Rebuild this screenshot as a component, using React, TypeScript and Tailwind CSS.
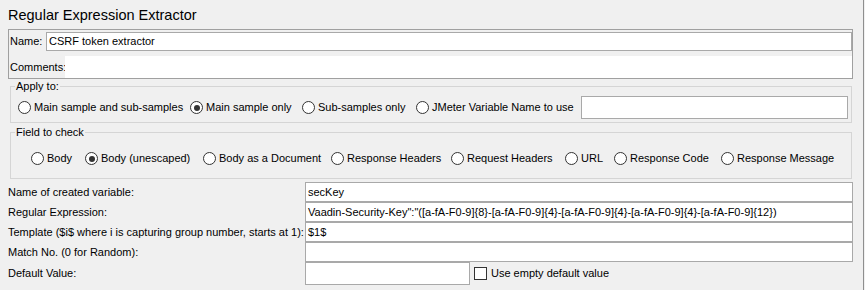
import React from 'react';

// Radio bullet drawn like the Windows look-and-feel in the screenshot
const Radio: React.FC<{ checked?: boolean }> = ({ checked }) => (
    <span className="w-[13px] h-[13px] shrink-0 rounded-full border border-[#333333] bg-white flex items-center justify-center">
        {checked && <span className="w-[6px] h-[6px] rounded-full bg-[#333333]" />}
    </span>
);

const RadioItem: React.FC<{ label: string; checked?: boolean; width: string }> = ({ label, checked, width }) => (
    <label className={`flex items-center gap-[3px] whitespace-nowrap ${width}`}>
        <Radio checked={checked} />
        <span>{label}</span>
    </label>
);

const fields = [
    { label: 'Body', width: 'w-[54px]' },
    { label: 'Body (unescaped)', width: 'w-[118px]', checked: true },
    { label: 'Body as a Document', width: 'w-[128px]' },
    { label: 'Response Headers', width: 'w-[120px]' },
    { label: 'Request Headers', width: 'w-[114px]' },
    { label: 'URL', width: 'w-[49px]' },
    { label: 'Response Code', width: 'w-[107px]' },
    { label: 'Response Message', width: 'w-[108px]' },
];

const rows = [
    { label: 'Name of created variable:', value: 'secKey' },
    {
        label: 'Regular Expression:',
        value: 'Vaadin-Security-Key":"([a-fA-F0-9]{8}-[a-fA-F0-9]{4}-[a-fA-F0-9]{4}-[a-fA-F0-9]{4}-[a-fA-F0-9]{12})',
    },
    { label: 'Template ($i$ where i is capturing group number, starts at 1):', value: '$1$' },
    { label: 'Match No. (0 for Random):', value: '' },
];

export default function App() {
    return (
        <div className="w-[865px] h-[290px] overflow-hidden bg-[#f0f0f0] font-['Liberation_Sans',Arial,sans-serif] text-[11px] text-black">
            <div className="w-[864px] h-full border-r border-[#8f8f8f] pl-2">
                {/* Title */}
                <div className="h-[29px] pt-[6px] text-[14.5px] leading-[18px]">Regular Expression Extractor</div>

                {/* Name / Comments */}
                <div className="w-[845px] border border-[#a0a0a0] pt-[2px]">
                    <div className="flex items-center h-[19px]">
                        <span className="w-[37px] shrink-0 pl-[1px]">Name:</span>
                        <div className="flex-1 h-full bg-white border border-[#a9a9a9] pl-[2px] flex items-center">CSRF token extractor</div>
                    </div>
                    <div className="flex items-center h-[22px] mt-[5px]">
                        <span className="w-[56px] shrink-0 pl-[1px] whitespace-nowrap">Comments:</span>
                        <div className="flex-1 h-full bg-white" />
                    </div>
                </div>

                {/* Apply to */}
                <div className="relative ml-[2px] mt-[7px] w-[842px] h-[37px] border border-[#d5d5d5] pt-[9px] pl-[7px] pr-[3px]">
                    <span className="absolute top-[-8px] left-[4px] px-[1px] leading-[14px] bg-[#f0f0f0]">Apply to:</span>
                    <div className="flex items-center h-[23px]">
                        <RadioItem label="Main sample and sub-samples" width="w-[172px]" />
                        <RadioItem label="Main sample only" width="w-[112px]" checked />
                        <RadioItem label="Sub-samples only" width="w-[114px]" />
                        <RadioItem label="JMeter Variable Name to use" width="w-[165px]" />
                        <div className="flex-1 h-full bg-white border border-[#a9a9a9]" />
                    </div>
                </div>

                {/* Field to check */}
                <div className="relative ml-[2px] mt-[9px] w-[842px] h-[47px] border border-[#d5d5d5] pt-[19px] pl-[20px]">
                    <span className="absolute top-[-8px] left-[4px] px-[1px] leading-[14px] bg-[#f0f0f0]">Field to check</span>
                    <div className="flex items-center h-[13px]">
                        {fields.map(f => (
                            <RadioItem key={f.label} label={f.label} width={f.width} checked={f.checked} />
                        ))}
                    </div>
                </div>

                {/* Extractor settings */}
                <div className="mt-[3px]">
                    {rows.map(r => (
                        <div key={r.label} className="flex items-center h-[20px]">
                            <span className="w-[297px] shrink-0 whitespace-nowrap">{r.label}</span>
                            <div className="w-[548px] h-full bg-white border border-[#a9a9a9] pl-[2px] flex items-center whitespace-nowrap overflow-hidden">
                                {r.value}
                            </div>
                        </div>
                    ))}
                    <div className="flex items-center h-[23px]">
                        <span className="w-[297px] shrink-0">Default Value:</span>
                        <div className="w-[165px] h-full bg-white border border-[#a9a9a9]" />
                        <span className="ml-[4px] w-[13px] h-[13px] border border-[#333333] bg-white" />
                        <span className="ml-[4px]">Use empty default value</span>
                    </div>
                </div>
            </div>
        </div>
    );
}
